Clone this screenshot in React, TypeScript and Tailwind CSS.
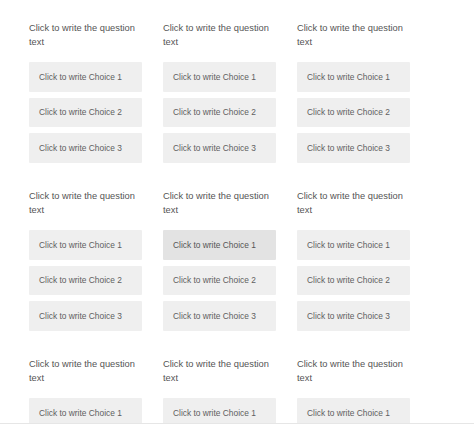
import React from "react";

const rows = [0, 1, 2];
const cols = [0, 1, 2];

function Question({ hovered, rowIndex }: { hovered: boolean; rowIndex: number }) {
  const choices = rowIndex === 2 ? [1] : [1, 2, 3];
  return (
    <div className="w-[113px] shrink-0">
      <div className="text-[9.3px] leading-[14px] text-[#555555] pl-[0.5px]">
        Click to write the question text
      </div>
      <div className="mt-[13px] flex flex-col gap-[6px]">
        {choices.map((c) => (
          <div
            key={c}
            className={
              c === 1 && hovered
                ? "h-[29.5px] flex items-center pl-[10.5px] pt-[1px] rounded-[1px] bg-[#e3e3e3] text-[8.4px] text-[#555555]"
                : "h-[29.5px] flex items-center pl-[10.5px] pt-[1px] rounded-[1px] bg-[#efefef] text-[8.4px] text-[#606060]"
            }
          >
            Click to write Choice {c}
          </div>
        ))}
      </div>
    </div>
  );
}

export default function App() {
  return (
    <div className="w-[474px] h-[438px] bg-white overflow-hidden" style={{ fontFamily: '"Liberation Sans", Arial, sans-serif' }}>
      <div className="h-[424px] overflow-hidden border-b border-[#e6e6e6]">
        <div className="pl-[28.5px] pt-[21px] flex flex-col gap-[26.5px]">
          {rows.map((r) => (
            <div key={r} className="flex gap-[21px]">
              {cols.map((c) => (
                <Question key={c} rowIndex={r} hovered={r === 1 && c === 1} />
              ))}
            </div>
          ))}
        </div>
      </div>
    </div>
  );
}
